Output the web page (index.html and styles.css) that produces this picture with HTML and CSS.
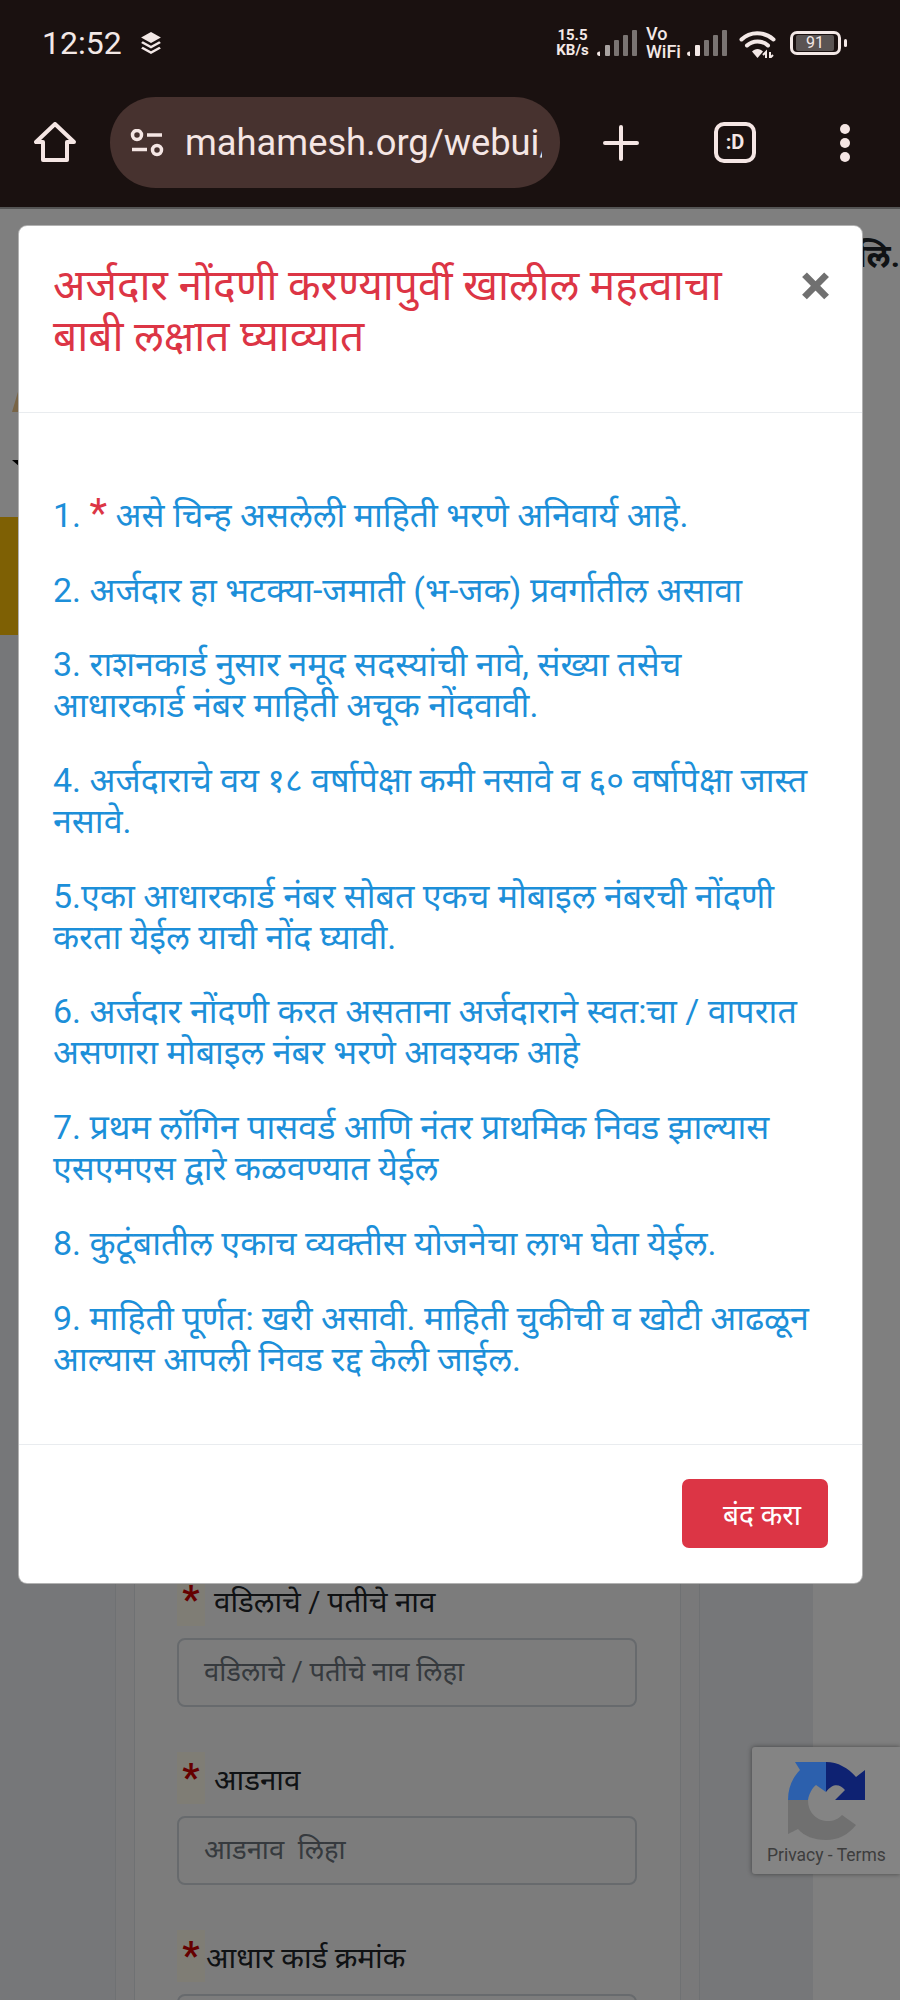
FILE: index.html
```html
<!DOCTYPE html>
<html lang="mr">
<head>
    <meta charset="UTF-8">
    <meta name="viewport" content="width=device-width, initial-scale=1.0">
    <title>mahamesh.org</title>
    <link rel="stylesheet" href="styles.css">
</head>
<body>

    <!-- Phone status bar -->
    <div class="status-bar">
        <span class="time">12:52</span>
        <svg class="layers-icon" viewBox="0 0 20 20"><path d="M10 0 19 5 10 10 1 5Z" fill="#f3e8e6"/><path d="M2.500 8.500 10 12.600 17.500 8.500 19 10 10 15 1 10Z" fill="#f3e8e6"/><path d="M2.500 13.500 10 17.600 17.500 13.500 19 15 10 20 1 15Z" fill="#f3e8e6"/></svg>
        <div class="status-right">
            <div class="speed"><span>15.5</span><span>KB/s</span></div>
            <svg class="signal" viewBox="0 0 40 26">
                <path d="M0 24a2.500 2.500 0 0 1 3-2.500V26H2.500A2.500 2.500 0 0 1 0 24Z" fill="#f3e8e6"/>
                <rect x="8" y="15" width="5" height="11" rx="1" fill="#a8a2a0"/>
                <rect x="17" y="10" width="5" height="16" rx="1" fill="#7a7472"/>
                <rect x="26" y="5" width="5" height="21" rx="1" fill="#7a7472"/>
                <rect x="35" y="0" width="5" height="26" rx="1" fill="#7a7472"/>
            </svg>
            <div class="vowifi"><span>Vo</span><span>WiFi</span></div>
            <svg class="signal" viewBox="0 0 40 26">
                <path d="M0 24a2.500 2.500 0 0 1 3-2.500V26H2.500A2.500 2.500 0 0 1 0 24Z" fill="#f3e8e6"/>
                <rect x="8" y="15" width="5" height="11" rx="1" fill="#f3e8e6"/>
                <rect x="17" y="10" width="5" height="16" rx="1" fill="#7a7472"/>
                <rect x="26" y="5" width="5" height="21" rx="1" fill="#7a7472"/>
                <rect x="35" y="0" width="5" height="26" rx="1" fill="#7a7472"/>
            </svg>
            <svg class="wifi" viewBox="0 0 37 29">
                <g fill="none" stroke="#f3e8e6" stroke-width="4" stroke-linecap="round">
                    <path d="M2.500 10.500C11 2 25 2 34.500 10.500"/>
                    <path d="M8 16.500C13.500 11 23.500 11 29 16.500"/>
                </g>
                <path d="M13 22.500C16 19 21 19 24 22.500L18.500 29Z" fill="#f3e8e6"/>
                <path d="M27 29v-6l-3 3M31 23v6l3-3" fill="none" stroke="#f3e8e6" stroke-width="2"/>
            </svg>
            <div class="battery"><span class="battery-level">91</span></div>
            <span class="battery-nub"></span>
        </div>
    </div>

    <!-- Browser toolbar -->
    <div class="toolbar">
        <svg class="home-icon" viewBox="0 0 42 42"><path d="M21 2 2 20H9V38H33V20H40Z" fill="none" stroke="#f5e6e4" stroke-width="4" stroke-linejoin="round"/></svg>
        <div class="url-pill">
            <svg class="tune-icon" viewBox="0 0 36 28"><g fill="none" stroke="#f5e6e4" stroke-width="3.500"><circle cx="8" cy="6" r="4.500"/><path d="M18 6H33"/><path d="M3 20.500H18"/><circle cx="28" cy="21" r="4.500"/></g></svg>
            <div class="url-text">mahamesh.org/webui/</div>
        </div>
        <svg class="plus-icon" viewBox="0 0 36 36"><path d="M18 2V34M2 18H34" stroke="#f5e6e4" stroke-width="4" stroke-linecap="round"/></svg>
        <div class="tab-count">:D</div>
        <div class="menu-dots"><span></span><span></span><span></span></div>
    </div>

    <!-- Page behind the dialog -->
    <main class="page">
        <div class="page-title">लि.</div>
        <div class="sliver-top"></div>
        <div class="sliver-dark"></div>
        <div class="side-stripe"></div>
        <div class="form-wrap">
            <div class="form-card">
                <div class="form-inner">
                    <div class="field">
                        <label class="field-label"><span class="star">*</span><span class="gap">वडिलाचे / पतीचे नाव</span></label>
                        <div class="text-input">वडिलाचे / पतीचे नाव लिहा</div>
                    </div>
                    <div class="field">
                        <label class="field-label"><span class="star">*</span><span class="gap">आडनाव</span></label>
                        <div class="text-input">आडनाव &nbsp;लिहा</div>
                    </div>
                    <div class="field">
                        <label class="field-label"><span class="star">*</span>आधार कार्ड क्रमांक</label>
                        <div class="text-input"></div>
                    </div>
                </div>
            </div>
        </div>
    </main>

    <div class="backdrop"></div>

    <!-- Instructions dialog -->
    <div class="modal">
        <div class="modal-header">
            <h2>अर्जदार नोंदणी करण्यापुर्वी खालील महत्वाचा बाबी लक्षात घ्याव्यात</h2>
            <span class="close">×</span>
        </div>
        <div class="modal-body">
            <p>1. <span class="red">*</span> असे चिन्ह असलेली माहिती भरणे अनिवार्य आहे.</p>
            <p>2. अर्जदार हा भटक्या-जमाती (भ-जक) प्रवर्गातील असावा</p>
            <p>3. राशनकार्ड नुसार नमूद सदस्यांची नावे, संख्या तसेच आधारकार्ड नंबर माहिती अचूक नोंदवावी.</p>
            <p>4. अर्जदाराचे वय १८ वर्षापेक्षा कमी नसावे व ६० वर्षापेक्षा जास्त नसावे.</p>
            <p>5.एका आधारकार्ड नंबर सोबत एकच मोबाइल नंबरची नोंदणी करता येईल याची नोंद घ्यावी.</p>
            <p>6. अर्जदार नोंदणी करत असताना अर्जदाराने स्वत:चा / वापरात असणारा मोबाइल नंबर भरणे आवश्यक आहे</p>
            <p>7. प्रथम लॉगिन पासवर्ड आणि नंतर प्राथमिक निवड झाल्यास एसएमएस द्वारे कळवण्यात येईल</p>
            <p>8. कुटूंबातील एकाच व्यक्तीस योजनेचा लाभ घेता येईल.</p>
            <p>9. माहिती पूर्णत: खरी असावी. माहिती चुकीची व खोटी आढळून आल्यास आपली निवड रद्द केली जाईल.</p>
        </div>
        <div class="modal-footer">
            <button class="btn-close">बंद करा</button>
        </div>
    </div>

    <!-- reCAPTCHA badge -->
    <div class="recaptcha">
        <svg class="recaptcha-logo" viewBox="0 0 80 80">
            <path d="M7 1H38V31L28 24C24 27 21 33 20 39H0C0 26 5 16 12 9Z" fill="#2c60ad"/>
            <path d="M38 1C50 1 60 7 68 16L77 9V39H47L57 29C52 24 46 21 38 31Z" fill="#0e2272"/>
            <path d="M0 39H20C20 53 30 60 40 60 46 60 50 58 54 54L68 64C60 74 50 79 38 79 26 79 16 75 10 68L0 73Z" fill="#707070"/>
        </svg>
        <div class="recaptcha-links">Privacy - Terms</div>
    </div>

</body>
</html>
```

FILE: styles.css
```css
* {
    margin: 0;
    padding: 0;
    box-sizing: border-box;
}

body {
    width: 900px;
    height: 2000px;
    position: relative;
    overflow: hidden;
    background-color: #fff;
    font-family: Roboto, "Noto Sans", sans-serif;
}

/* Status bar */
.status-bar {
    height: 86px;
    padding-left: 42px;
    display: flex;
    align-items: center;
    background-color: #1a1110;
    color: #f3e8e6;
}

.time {
    font-size: 32px;
    width: 98px;
}

.layers-icon {
    width: 22px;
    height: 22px;
}

.status-right {
    margin-left: auto;
    margin-right: 53px;
    display: flex;
    align-items: center;
}

.speed {
    display: flex;
    flex-direction: column;
    font-size: 15px;
    line-height: 15px;
    font-weight: 700;
    text-align: center;
    width: 33px;
    margin-right: 8px;
}

.signal {
    width: 40px;
    height: 26px;
}

.vowifi {
    display: flex;
    flex-direction: column;
    font-size: 18px;
    line-height: 18px;
    width: 35px;
    margin: 0 6px 0 9px;
    font-weight: 500;
}

.wifi {
    width: 37px;
    height: 29px;
    margin: 0 14px 0 12px;
}

.battery {
    width: 51px;
    height: 24px;
    border: 3px solid #f3e8e6;
    border-radius: 7px;
    padding: 1px 3px;
}

.battery-level {
    display: block;
    width: 38px;
    height: 16px;
    line-height: 16px;
    background-color: #5a5453;
    border-radius: 2px;
    font-size: 16px;
    text-align: center;
}

.battery-nub {
    width: 3px;
    height: 8px;
    margin-left: 3px;
    background-color: #f3e8e6;
    border-radius: 2px;
}

/* Browser toolbar */
.toolbar {
    height: 121px;
    display: flex;
    align-items: center;
    background-color: #1a1110;
    color: #f5e6e4;
    padding-bottom: 8px;
}

.home-icon {
    width: 42px;
    height: 42px;
    margin-left: 34px;
}

.url-pill {
    width: 450px;
    height: 91px;
    margin-left: 34px;
    padding-left: 19px;
    display: flex;
    align-items: center;
    background-color: #47322f;
    border-radius: 46px;
}

.tune-icon {
    width: 36px;
    height: 28px;
    flex-shrink: 0;
}

.url-text {
    width: 357px;
    margin-left: 20px;
    font-size: 36.300px;
    white-space: nowrap;
    overflow: hidden;
}

.plus-icon {
    width: 36px;
    height: 36px;
    margin-left: 43px;
}

.tab-count {
    width: 42px;
    height: 41px;
    margin-left: 75px;
    border: 4px solid #f5e6e4;
    border-radius: 10px;
    font-size: 20px;
    font-weight: 700;
    line-height: 33px;
    text-align: center;
}

.menu-dots {
    margin-left: 84px;
    display: flex;
    flex-direction: column;
    gap: 4px;
}

.menu-dots span {
    display: block;
    width: 10px;
    height: 10px;
    background-color: #f5e6e4;
    border-radius: 50%;
}

/* Page behind the dialog */
.page {
    height: 1793px;
    overflow: hidden;
    background-color: #fff;
    border-top: 2px solid #aaa;
}

.page-title {
    height: 70px;
    padding-top: 24px;
    font-size: 32px;
    line-height: 46px;
    font-weight: 700;
    text-align: right;
    color: #212529;
}

.sliver-top {
    width: 8px;
    height: 27px;
    margin: 106px 0 0 12px;
    background-color: #f0c98c;
    clip-path: polygon(100% 0, 100% 100%, 0 100%);
}

.sliver-dark {
    width: 8px;
    height: 7px;
    margin: 48px 0 0 12px;
    background-color: #000;
    clip-path: polygon(0 0, 100% 0, 100% 100%);
}

.side-stripe {
    width: 30px;
    height: 118px;
    margin-top: 50px;
    background-color: #fdc009;
}

.form-wrap {
    width: 813px;
    height: 1365px;
    padding: 773px 0 0 115px;
    background-color: #eceef2;
}

.form-card {
    width: 585px;
    height: 592px;
    padding: 0 18px;
    background-color: #f2f3f5;
    border-left: 1px solid #dee2e6;
    border-right: 1px solid #dee2e6;
}

.form-inner {
    height: 100%;
    padding: 166px 43px 0 42px;
    background-color: #f9f9f9;
    border-left: 1px solid #dee2e6;
    border-right: 1px solid #dee2e6;
}

.field {
    margin-bottom: 45px;
}

.field-label {
    display: flex;
    align-items: center;
    height: 52px;
    margin-bottom: 12px;
    font-size: 29.500px;
    color: #212529;
}

.star {
    width: 28px;
    height: 52px;
    margin-right: 1px;
    background-color: #fffaeb;
    color: #c00;
    font-weight: 700;
    font-size: 38px;
    line-height: 52px;
    text-align: center;
}

.gap {
    margin-left: 8px;
}

.text-input {
    height: 69px;
    padding: 0 25px;
    border: 2px solid #ced4da;
    border-radius: 8px;
    font-size: 27.400px;
    line-height: 65px;
    color: #6c757d;
}

.backdrop {
    position: absolute;
    top: 207px;
    left: 0;
    width: 100%;
    height: 1793px;
    background-color: rgba(0, 0, 0, 0.5);
}

/* Dialog */
.modal {
    position: absolute;
    top: 225px;
    left: 18px;
    width: 845px;
    height: 1359px;
    display: flex;
    flex-direction: column;
    background-color: #fff;
    border: 1px solid rgba(0, 0, 0, 0.3);
    border-radius: 9px;
}

.modal-header {
    height: 187px;
    display: flex;
    justify-content: space-between;
    padding: 34px 31px 0 34px;
    border-bottom: 1px solid #e9ecef;
}

.modal-header h2 {
    width: 690px;
    font-size: 42.500px;
    line-height: 51px;
    font-weight: 400;
    color: #dc3545;
}

.close {
    font-size: 58px;
    line-height: 50px;
    font-weight: 700;
    color: #707070;
}

.modal-body {
    flex: 1;
    padding: 80px 44px 0 34px;
    color: #1c8fd9;
    font-size: 34px;
    line-height: 41px;
}

.modal-body p {
    margin-bottom: 33.700px;
}

.red {
    color: #dc3545;
    font-size: 1.200em;
    line-height: 1;
}

.modal-footer {
    height: 139px;
    display: flex;
    justify-content: flex-end;
    padding: 34px 34px 0 0;
    border-top: 1px solid #e9ecef;
}

.btn-close {
    width: 146px;
    height: 69px;
    background-color: #dc3545;
    color: white;
    border: none;
    border-radius: 7px;
    font-family: Roboto, "Noto Sans", sans-serif;
    font-size: 28px;
    padding-left: 14px;
}

/* reCAPTCHA */
.recaptcha {
    position: absolute;
    top: 1747px;
    left: 752px;
    width: 148px;
    height: 127px;
    padding-top: 14px;
    background-color: #848484;
    border-radius: 3px 0 0 3px;
    box-shadow: 0 0 5px rgba(0, 0, 0, 0.45);
}

.recaptcha-logo {
    display: block;
    width: 80px;
    height: 80px;
    margin-left: 36px;
}

.recaptcha-links {
    margin: 4px 0 0 15px;
    font-size: 17.500px;
    color: #3d3d3d;
    white-space: nowrap;
}
```
